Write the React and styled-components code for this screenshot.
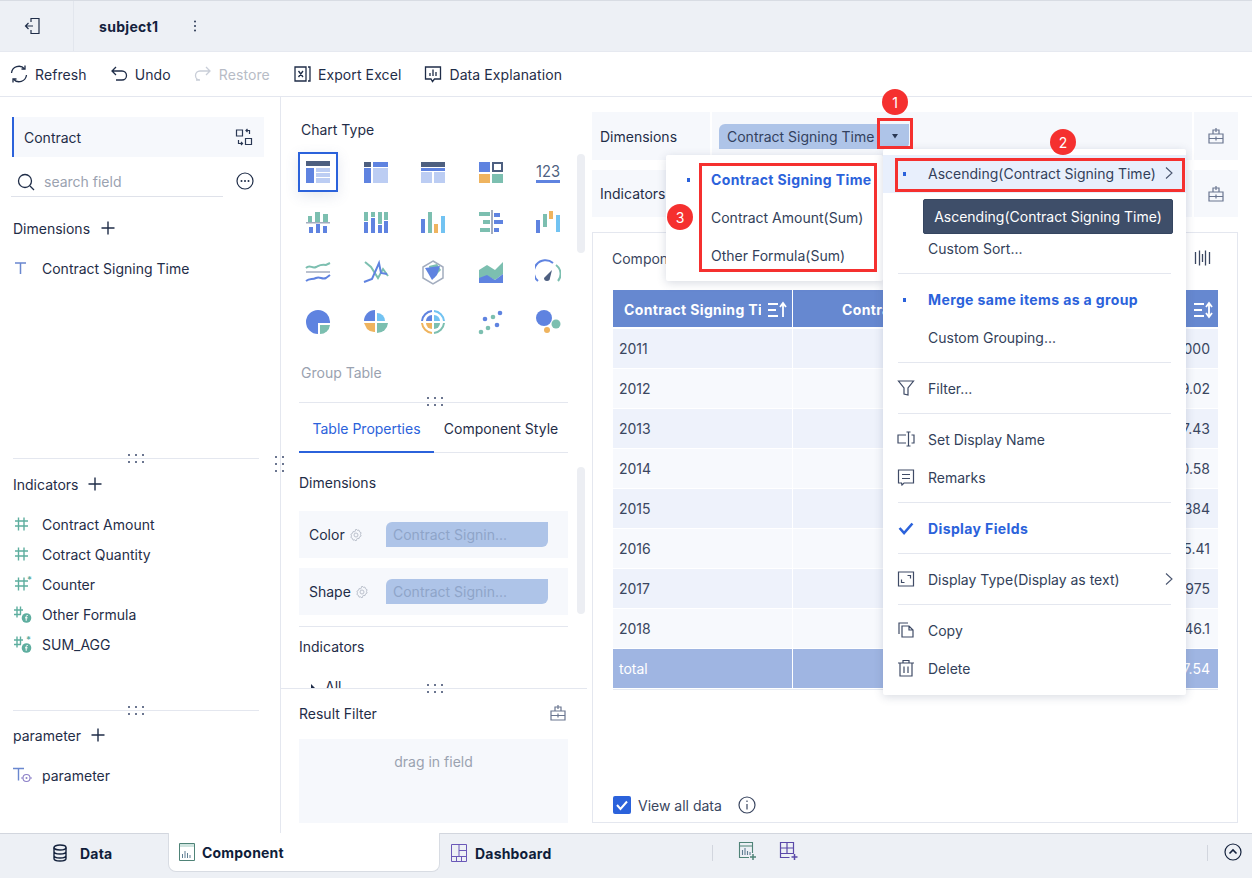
import React from "react";
import styled, { createGlobalStyle } from "styled-components";

const BLUE = "#5f83e0";
const LIGHT = "#bccdf3";
const DARK = "#4d5f80";
const TEAL = "#7cbfb0";
const ORANGE = "#efb45f";
const SKY = "#72c3f2";
const INK = "#1f2d48";

const GlobalStyle = createGlobalStyle`
  html, body {
    margin: 0;
    padding: 0;
    background: #fff;
  }
  body {
    font-family: Inter, "Liberation Sans", sans-serif;
    font-size: 14px;
    color: ${INK};
  }
  * {
    box-sizing: border-box;
  }
`;

const Page = styled.div`
  position: relative;
  width: 1252px;
  height: 878px;
  overflow: hidden;
  display: flex;
  flex-direction: column;
`;

const TopBar = styled.header`
  height: 52px;
  flex: none;
  display: flex;
  align-items: center;
  background: #edf0f5;
  border-top: 1px solid #d8dce3;
  border-bottom: 1px solid #e6e9f0;
`;

const BackCell = styled.div`
  width: 74px;
  height: 100%;
  display: flex;
  align-items: center;
  justify-content: center;
  padding-right: 8px;
  border-right: 1px solid #e2e6ed;
`;

const SubjectName = styled.span`
  margin-left: 25px;
  font-weight: 700;
  letter-spacing: 0.3px;
  color: #14223d;
  width: 94px;
`;

const ToolBar = styled.div`
  height: 45px;
  flex: none;
  display: flex;
  align-items: center;
  gap: 23px;
  padding-left: 10px;
  border-bottom: 1px solid #e4e7ef;
`;

const ToolItem = styled.div`
  display: flex;
  align-items: center;
  gap: 7px;
  letter-spacing: 0.1px;
  color: ${p => (p.$disabled ? "#b7bcc6" : INK)};
`;

const Main = styled.main`
  flex: 1;
  display: flex;
  min-height: 0;
`;

const LeftPanel = styled.aside`
  position: relative;
  width: 281px;
  flex: none;
  border-right: 1px solid #e4e7ef;
  display: flex;
  flex-direction: column;
`;

const PanelHandle = styled.div`
  position: absolute;
  left: 275px;
  top: 358px;
  display: flex;
`;

const LeftTop = styled.div`
  height: 361px;
  flex: none;
  padding: 20px 16px 0 12px;
`;

const DataSet = styled.div`
  height: 40px;
  display: flex;
  align-items: center;
  justify-content: space-between;
  padding: 0 11px 0 10px;
  background: #f6f8fc;
  border-left: 2px solid #2b62db;
`;

const SearchRow = styled.div`
  display: flex;
  align-items: center;
  justify-content: space-between;
  margin-top: 8px;
`;

const SearchBox = styled.div`
  width: 212px;
  height: 32px;
  margin-left: -1px;
  padding: 2px 0 0 6px;
  display: flex;
  align-items: center;
  gap: 9px;
  color: #9aa2b0;
  border-bottom: 1px solid #dfe2ea;
`;

const MoreCircle = styled.div`
  display: flex;
  margin-right: 10px;
`;

const LeftHeading = styled.div`
  display: flex;
  align-items: center;
  gap: ${p => p.$gap || 9}px;
  height: 20px;
  margin-top: ${p => p.$top || 0}px;
  margin-left: ${p => p.$left || 0}px;
`;

const LeftSection = styled.div`
  position: relative;
  height: ${p => p.$h}px;
  flex: ${p => (p.$h ? "none" : 1)};
  margin: 0 21px 0 13px;
  padding-top: ${p => p.$pad}px;
  border-top: 1px solid #e4e7ef;
`;

const FieldList = styled.div`
  margin-top: ${p => p.$top}px;
  margin-left: ${p => p.$left || 0}px;
`;

const FieldRow = styled.div`
  height: 30px;
  display: flex;
  align-items: center;
`;

const FieldIcon = styled.span`
  width: 29px;
  flex: none;
  display: flex;
`;

const DragDots = styled.div`
  position: absolute;
  top: ${p => (p.$top === undefined ? -6 : p.$top)}px;
  left: 50%;
  margin-left: -${p => p.$shift || 10}px;
  display: flex;
  z-index: 1;
`;

const MidPanel = styled.section`
  width: 306px;
  flex: none;
  display: flex;
  flex-direction: column;
`;

const ChartSection = styled.div`
  position: relative;
  height: 305px;
  flex: none;
  padding: 23px 19px 0 17px;
`;

const PropsSection = styled.div`
  position: relative;
  height: 286px;
  flex: none;
  overflow: hidden;
  margin: 0 19px 0 18px;
  border-top: 1px solid #e4e7ef;
`;

const Thumb = styled.div`
  position: absolute;
  right: ${p => p.$right}px;
  top: ${p => p.$top}px;
  width: 8px;
  height: ${p => p.$h}px;
  border-radius: 4px;
  background: #eceef3;
`;

const SmallTitle = styled.div`
  height: 20px;
  line-height: 20px;
  margin-left: ${p => p.$left || 0}px;
  margin-top: ${p => p.$top || 0}px;
  color: ${p => (p.$muted ? "#9aa2b0" : INK)};
`;

const ChartGrid = styled.div`
  display: grid;
  grid-template-columns: repeat(5, 40px);
  grid-auto-rows: 40px;
  justify-content: space-between;
  row-gap: 10px;
  margin: 12px 0 0 0;
  width: 270px;
`;

const ChartCell = styled.div`
  display: flex;
  align-items: center;
  justify-content: center;
  border: ${p => (p.$selected ? "2px solid #2b62db" : "0")};
  box-shadow: ${p => (p.$selected ? "0 4px 14px rgba(70, 90, 140, 0.14)" : "none")};
`;

const Tabs = styled.div`
  display: flex;
  height: 50px;
  border-bottom: 1px solid #e4e7ef;
`;

const Tab = styled.div`
  width: ${p => p.$w}px;
  display: flex;
  align-items: center;
  justify-content: center;
  padding-top: 2px;
  margin-bottom: -1px;
  color: ${p => (p.$active ? "#2b62db" : INK)};
  border-bottom: 2px solid ${p => (p.$active ? "#2b62db" : "transparent")};
`;

const PropBlock = styled.div`
  margin-top: ${p => p.$top}px;
  height: 47px;
  padding-left: 10px;
  display: flex;
  align-items: center;
  background: #f6f8fc;
`;

const PropLabel = styled.div`
  width: 77px;
  display: flex;
  align-items: center;
  gap: 4px;
`;

const DisabledPill = styled.div`
  width: 162px;
  height: 25px;
  line-height: 25px;
  padding-left: 7px;
  background: #aec4e8;
  border-radius: 6px 0 6px 0;
  color: #8ea4c9;
`;

const PropDivider = styled.div`
  margin-top: 11px;
  border-top: 1px solid #e4e7ef;
`;

const AllRow = styled.div`
  margin: 21px 0 0 12px;
  display: flex;
  align-items: center;
  gap: 8px;
`;

const ResultSection = styled.div`
  position: relative;
  flex: 1;
  padding: 14px 19px 10px 18px;
  border-top: 1px solid #e4e7ef;
`;

const ResultHead = styled.div`
  display: flex;
  align-items: center;
  justify-content: space-between;
  height: 20px;
  padding-right: 1px;
`;

const DropBox = styled.div`
  height: 84px;
  margin-top: 16px;
  padding-top: 14px;
  text-align: center;
  color: #9aa2b0;
  background: #f6f8fc;
`;

const RightPanel = styled.section`
  flex: 1;
  min-width: 0;
  display: flex;
  flex-direction: column;
  padding: 15px 14px 10px 5px;
`;

const ShelfRow = styled.div`
  height: ${p => p.$h}px;
  margin-bottom: ${p => p.$mb}px;
  flex: none;
  display: flex;
  align-items: center;
  background: #f6f8fc;
`;

const ShelfLabel = styled.div`
  width: 120px;
  height: 100%;
  display: flex;
  align-items: center;
  padding-left: 8px;
  border-right: 2px solid #fff;
`;

const ShelfBody = styled.div`
  flex: 1;
  height: 100%;
  padding: 12px 0 0 7px;
`;

const FieldPill = styled.div`
  width: 190px;
  height: 25px;
  display: flex;
  align-items: center;
  justify-content: space-between;
  padding: 0 10px 0 8px;
  background: #aec4e8;
  border-radius: 6px 0 6px 0;
  color: #33415e;
`;

const ShelfAction = styled.div`
  width: 46px;
  height: 100%;
  display: flex;
  align-items: center;
  justify-content: center;
  border-left: 2px solid #fff;
`;

const Card = styled.div`
  flex: 1;
  min-height: 0;
  display: flex;
  flex-direction: column;
  padding: 15px 19px 8px 20px;
  border: 1px solid #e4e7ef;
`;

const CardHead = styled.div`
  display: flex;
  align-items: center;
  justify-content: space-between;
  height: 20px;
  margin: 0 6px 0 -1px;
  color: #3a4660;
`;

const DataTable = styled.div`
  margin-top: 22px;
  display: flex;
  flex-direction: column;
  border-bottom: 1px solid #e6eaf2;
`;

const HeadRow = styled.div`
  height: 37px;
  display: grid;
  grid-template-columns: 179px 1fr;
  column-gap: 1px;
  margin-bottom: 2px;
  color: #fff;
  font-weight: 700;
  letter-spacing: 0.35px;
`;

const HeadCell = styled.div`
  display: flex;
  align-items: center;
  justify-content: space-between;
  background: #6688d0;
  padding: 2px 3px 0 ${p => p.$pad}px;
`;

const ClipText = styled.span`
  width: ${p => p.$w}px;
  overflow: hidden;
  white-space: nowrap;
`;

const BodyRow = styled.div`
  height: 40px;
  display: grid;
  grid-template-columns: 179px 1fr;
  column-gap: 1px;
  color: ${p => (p.$total ? "#fff" : "#3a4660")};
  border-bottom: 1px solid #fff;
`;

const BodyCell = styled.div`
  display: flex;
  align-items: center;
  padding: 0 8px 0 6px;
  justify-content: ${p => (p.$right ? "flex-end" : "flex-start")};
  background: ${p => (p.$total ? "#9fb5e2" : p.$odd ? "#eef2fb" : "#f7f9fd")};
`;

const CardFoot = styled.div`
  margin-top: auto;
  display: flex;
  align-items: center;
  color: #3a4660;
`;

const CheckBox = styled.div`
  width: 18px;
  height: 18px;
  margin-right: 7px;
  display: flex;
  align-items: center;
  justify-content: center;
  border-radius: 2px;
  background: #2b62db;
`;

const InfoWrap = styled.div`
  display: flex;
  margin-left: 16px;
`;

const BottomBar = styled.footer`
  height: 45px;
  flex: none;
  display: flex;
  align-items: flex-start;
  background: #edf0f5;
  border-top: 1px solid #d2d6de;
`;

const BottomTab = styled.div`
  width: ${p => p.$w}px;
  height: ${p => (p.$active ? 39 : 38)}px;
  margin-top: ${p => (p.$active ? -1 : 0)}px;
  padding-left: ${p => p.$pad}px;
  display: flex;
  align-items: center;
  gap: ${p => p.$gap}px;
  font-weight: 700;
  letter-spacing: 0.2px;
  color: #0f1d3a;
  background: ${p => (p.$active ? "#fff" : "transparent")};
  border: ${p => (p.$active ? "1px solid #d8dce3" : "0")};
  border-top: 0;
  border-radius: 0 0 8px 8px;
`;

const BarDivider = styled.div`
  width: 1px;
  height: 16px;
  margin-top: ${p => p.$top || 11}px;
  margin-left: ${p => p.$left}px;
  background: #d2d6de;
`;

const BarIcon = styled.div`
  display: flex;
  margin-left: ${p => p.$left}px;
  margin-top: ${p => p.$top || 7}px;
`;

const Popup = styled.div`
  position: absolute;
  left: ${p => p.$x}px;
  top: ${p => p.$y}px;
  width: ${p => p.$w}px;
  background: #fff;
  padding: 6px 0 ${p => p.$bottom || 6}px;
  border-radius: 2px;
  box-shadow: 0 2px 10px rgba(60, 75, 110, 0.2);
  z-index: 5;
`;

const MenuRow = styled.div`
  position: relative;
  height: ${p => p.$h || 38}px;
  display: flex;
  align-items: center;
  padding-left: ${p => p.$pad}px;
  padding-bottom: 2px;
  color: ${p => (p.$active ? "#2b62db" : "#333f5a")};
  font-weight: ${p => (p.$active ? 700 : 400)};
  letter-spacing: ${p => (p.$active ? "0.38px" : "0")};
  background: ${p => (p.$hover ? "#e8effc" : "transparent")};
`;

const MenuBullet = styled.span`
  position: absolute;
  left: ${p => p.$x}px;
  top: 17px;
  width: 3px;
  height: 4px;
  background: #2b62db;
`;

const MenuGlyph = styled.span`
  position: absolute;
  left: 14px;
  top: 9px;
  display: flex;
`;

const MenuArrow = styled.span`
  position: absolute;
  right: 10px;
  top: 11px;
  display: flex;
`;

const MenuDivider = styled.div`
  margin: 5px 15px 7px 15px;
  border-top: 1px solid #e4e7ef;
`;

const Hint = styled.div`
  position: absolute;
  left: 923px;
  top: 199px;
  width: 250px;
  height: 35px;
  display: flex;
  align-items: center;
  justify-content: center;
  white-space: nowrap;
  color: #fff;
  background: #3e4e69;
  border: 1px solid #354560;
  border-radius: 2px;
  z-index: 6;
`;

const RedBox = styled.div`
  position: absolute;
  left: ${p => p.$x}px;
  top: ${p => p.$y}px;
  width: ${p => p.$w}px;
  height: ${p => p.$h}px;
  border: 3px solid #f5302f;
  z-index: 7;
`;

const Badge = styled.div`
  position: absolute;
  left: ${p => p.$x - 13}px;
  top: ${p => p.$y - 13}px;
  width: 26px;
  height: 26px;
  border-radius: 50%;
  display: flex;
  align-items: center;
  justify-content: center;
  color: #fff;
  background: #f5302f;
  font-size: 14px;
  z-index: 8;
`;

const Line = ({ size = 18, children, vb = 18, color = INK, sw = 1.3 }) => (
  <svg width={size} height={size} viewBox={`0 0 ${vb} ${vb}`} fill="none" stroke={color} strokeWidth={sw}>
    {children}
  </svg>
);

const Dots = ({ vertical }) => (
  <svg width={vertical ? 10 : 20} height={vertical ? 20 : 10} fill="#6b7690" stroke="none">
    {(vertical
      ? [[1, 2], [8, 2], [1, 9], [8, 9], [1, 16], [8, 16]]
      : [[3, 2], [10, 2], [17, 2], [3, 9], [10, 9], [17, 9]]
    ).map(([x, y]) => (
      <rect key={`${x}-${y}`} x={x - 1} y={y - 1} width="2" height="2" />
    ))}
  </svg>
);

const PlusIcon = () => (
  <Line size={14} vb={14} sw={1.4}>
    <path d="M7 .5v13M.5 7h13" />
  </Line>
);

const BoxIcon = () => (
  <Line color="#6a7690" sw={1.2}>
    <path d="M2 7h14v9H2zM2 11.500h14M6 7V3h6v4M9 1v4M9 9.500v4" />
  </Line>
);

const Hash = ({ star, formula }) => (
  <svg width="20" height="20" viewBox="0 0 20 20" fill="none">
    <g stroke="#5eae9f" strokeWidth="1.4">
      {formula ? (
        <path d="M1 6h9M1 10.500h7M4 2.500v11M7.500 2.500v8" />
      ) : (
        <path d="M2 7h13M2 12h13M5.500 3.500v13M11 3.500v13" />
      )}
    </g>
    {star && <text x={formula ? 13 : 14} y="9" fontSize="9" fontWeight="700" fill="#5eae9f">*</text>}
    {formula && (
      <g>
        <circle cx="13.500" cy="14" r="4.800" fill="#5eae9f" />
        <path d="M14.800 11.500c-1.200-.3-1.600.4-1.600 1.300v4M12 13.800h2.600" stroke="#fff" strokeWidth="1" />
      </g>
    )}
  </svg>
);

const TextFieldIcon = () => (
  <svg width="18" height="18" viewBox="0 0 18 18" fill="none" stroke="#6a87cf" strokeWidth="1.5">
    <path d="M2 4h11M7.500 4v11" />
  </svg>
);

const ParamIcon = () => (
  <svg width="20" height="20" viewBox="0 0 20 20" fill="none" stroke="#6a87cf" strokeWidth="1.4">
    <path d="M0 3.500h11M5.500 3.500v12" />
    <circle cx="13.500" cy="13" r="3.500" stroke="#8c80c8" strokeWidth="1.100" />
    <circle cx="13.500" cy="13" r="1" fill="#8c80c8" stroke="none" />
    <path d="M8 13h2M17 13h2" stroke="#8c80c8" strokeWidth="1" />
  </svg>
);

const SortIcon = ({ both }) => (
  <svg width="22" height="20" viewBox="0 0 22 20" fill="none" stroke="#fff" strokeWidth="1.800">
    <path d="M1 4h10M1 10h8M1 16h10M16 17V4M13 7l3-4 3 4" />
    {both && <path d="M13 13l3 4 3-4" />}
  </svg>
);

const GearIcon = () => (
  <svg width="14" height="14" viewBox="0 0 14 14" fill="none" stroke="#bcc2cd" strokeWidth="1">
    <path d="M7 1l1.200 1.300 1.800-.2.500 1.700 1.600.9-.6 1.700.6 1.600-1.600.9-.5 1.700-1.800-.2L7 13l-1.200-1.100-1.800.2-.5-1.700-1.600-.9.6-1.600-.6-1.700 1.600-.9.5-1.700 1.800.2z" />
    <circle cx="7" cy="7" r="2" />
  </svg>
);

const ChartGlyph = ({ children }) => (
  <svg width="26" height="26" viewBox="-1 -1 26 26" fill="none">
    {children}
  </svg>
);

const Bars = ({ items }) =>
  items.map(([x, y, w, h, fill]) => <rect key={`${x}-${y}`} x={x} y={y} width={w} height={h} fill={fill} />);

const chartGlyphs = [
  <Bars items={[[0, 1, 24, 5, DARK], [0, 8, 8, 15, BLUE], [10, 8, 14, 4, LIGHT], [10, 13, 14, 4, LIGHT], [10, 18, 14, 5, LIGHT]]} />,
  <Bars items={[[0, 2, 7, 5, DARK], [9, 2, 15, 5, BLUE], [0, 8, 7, 15, BLUE], [9, 8, 15, 15, LIGHT]]} />,
  <Bars items={[[0, 2, 24, 5, DARK], [0, 8, 24, 3, BLUE], [0, 12, 11, 11, LIGHT], [13, 12, 11, 11, LIGHT]]} />,
  <>
    <rect x="0" y="2" width="11" height="10" fill={BLUE} />
    <rect x="14" y="3" width="9" height="8" stroke={DARK} strokeWidth="2" />
    <rect x="0" y="14" width="11" height="9" fill={ORANGE} />
    <rect x="13" y="14" width="11" height="9" fill={TEAL} />
  </>,
  <>
    <text x="0" y="17" fontSize="16" fill={DARK} fontFamily="Inter, sans-serif" textLength="24" lengthAdjust="spacingAndGlyphs">123</text>
    <rect x="0" y="20" width="24" height="3" fill={BLUE} />
  </>,
  <Bars items={[[2, 6, 4, 6, TEAL], [9, 2, 5, 10, TEAL], [17, 4, 5, 8, TEAL], [0, 12, 24, 1.500, "#a3adbf"], [3, 17, 4, 6, BLUE], [10, 14, 4, 9, BLUE], [17, 16, 4, 7, BLUE]]} />,
  <Bars items={[[0, 2, 4, 9, TEAL], [0, 12, 4, 11, BLUE], [7, 2, 4, 5, TEAL], [7, 8, 4, 15, BLUE], [14, 2, 4, 12, TEAL], [14, 15, 4, 8, BLUE], [20, 2, 4, 8, TEAL], [20, 11, 4, 12, BLUE]]} />,
  <Bars items={[[0, 9, 4, 14, BLUE], [7, 2, 4, 21, TEAL], [13, 14, 4, 9, ORANGE], [20, 6, 4, 17, SKY]]} />,
  <Bars items={[[0, 2, 11, 4, TEAL], [4, 10, 7, 4, TEAL], [1, 18, 10, 4, TEAL], [12, 0, 2, 24, "#a3adbf"], [15, 3, 6, 4, BLUE], [15, 10, 9, 4, BLUE], [15, 18, 5, 4, BLUE]]} />,
  <Bars items={[[0, 10, 4, 13, BLUE], [7, 4, 4, 13, TEAL], [13, 1, 4, 8, ORANGE], [20, 5, 4, 17, SKY]]} />,
  <>
    <path d="M0 8c4-4 6 1 10-1s5-3 10-2l4-2" stroke={TEAL} strokeWidth="2" />
    <path d="M0 12h24" stroke="#a3adbf" strokeWidth="1.500" />
    <path d="M0 21c4-3 6-1 10-3s6 2 10 0l4-3" stroke={BLUE} strokeWidth="2" />
  </>,
  <>
    <path d="M1 2l6 5 7 11 5-9 5 7" stroke={TEAL} strokeWidth="2" />
    <path d="M0 22l8-3 7-16 2 10 6 1" stroke={BLUE} strokeWidth="2" />
  </>,
  <>
    <path d="M12 1l10 6v11l-10 6-10-6V7z" stroke="#a3adbf" strokeWidth="1.500" />
    <path d="M8 6l8-2 4 6-4 4-3 4-4-6z" fill={TEAL} />
    <path d="M4 8l15-2-3 9-5 5-4-7z" fill={BLUE} />
  </>,
  <>
    <path d="M0 10l8-5 8 5 8-8v12l-8 6-8-4-8 4z" fill={TEAL} />
    <path d="M0 18l8-3 8 5 8-6v9H0z" fill={BLUE} />
  </>,
  <>
    <path d="M2 21A11 11 0 0 1 17 3" stroke={BLUE} strokeWidth="2" />
    <path d="M20 5a11 11 0 0 1 2 16" stroke={TEAL} strokeWidth="2" />
    <path d="M8 18l8-8-2 8a3 3 0 0 1-6 0z" fill={DARK} />
  </>,
  <>
    <path d="M12 0a12 12 0 1 0 0 24v-11h12a12 12 0 0 0-12-13z" fill={BLUE} />
    <path d="M14 15h10a10 10 0 0 1-10 9z" fill={TEAL} />
  </>,
  <>
    <path d="M11 0v11H0A11 11 0 0 1 11 0z" fill={BLUE} />
    <path d="M13 3a8 8 0 0 1 8 8h-8z" fill={SKY} />
    <path d="M0 13h11v9A10 10 0 0 1 3 19z" fill={ORANGE} />
    <path d="M13 13h11a11 11 0 0 1-11 10z" fill={TEAL} />
  </>,
  <>
    <path d="M1 11A11 11 0 0 1 11 1" stroke={BLUE} strokeWidth="2" />
    <path d="M13 1a11 11 0 0 1 10 10" stroke={SKY} strokeWidth="2" />
    <path d="M1 13a11 11 0 0 0 10 10" stroke={ORANGE} strokeWidth="2" />
    <path d="M13 23a11 11 0 0 0 10-10" stroke={TEAL} strokeWidth="2" />
    <path d="M11 5v6H5a6 6 0 0 1 6-6z" fill={BLUE} />
    <path d="M13 5a6 6 0 0 1 6 6h-6z" fill={SKY} />
    <path d="M5 13h6v6a6 6 0 0 1-6-6z" fill={ORANGE} />
    <path d="M13 13h6a6 6 0 0 1-6 6z" fill={TEAL} />
  </>,
  <>
    <circle cx="6" cy="9" r="2.300" fill={BLUE} />
    <circle cx="14" cy="7" r="2.300" fill={TEAL} />
    <circle cx="21" cy="3" r="2.300" fill={BLUE} />
    <circle cx="2" cy="22" r="2.300" fill={TEAL} />
    <circle cx="9" cy="18" r="2.300" fill={TEAL} />
    <circle cx="18" cy="15" r="2.300" fill={BLUE} />
  </>,
  <>
    <circle cx="8" cy="8" r="8" fill={BLUE} />
    <circle cx="20" cy="14" r="4.500" fill={TEAL} />
    <circle cx="11" cy="20" r="3" fill={ORANGE} />
  </>
];

const BackIcon = () => (
  <Line sw={1.200}>
    <path d="M7 5V1.500h8v15H7V13M9 9H1.500M4.500 6L1.500 9l3 3" />
  </Line>
);

const KebabIcon = () => (
  <svg width="4" height="14" fill="#2a3854">
    <circle cx="2" cy="2.500" r="1" />
    <circle cx="2" cy="7" r="1" />
    <circle cx="2" cy="11.500" r="1" />
  </svg>
);

const RefreshIcon = () => (
  <Line>
    <path d="M1.500 8a7.500 7.500 0 0 1 13-4.200M16.500 10a7.500 7.500 0 0 1-13 4.200" />
    <path d="M15 .5v3.500h-3.500M3 17.500V14h3.500" />
  </Line>
);

const UndoIcon = ({ color = INK, flip }) => (
  <Line color={color}>
    <path d={flip ? "M12 2l4 4-4 4M16 6H6a4.500 4.500 0 0 0 0 9h-4" : "M6 2L2 6l4 4M2 6h10a4.500 4.500 0 0 1 0 9H6"} />
  </Line>
);

const ExcelIcon = () => (
  <Line>
    <path d="M13 2H2v14h11zM15 2h2v14h-2M5.500 6l4.500 6M10 6l-4.500 6" />
  </Line>
);

const ExplainIcon = () => (
  <Line>
    <path d="M1.500 2h15v12h-6l-2 2.500-1.500-2.500H1.500zM6 11V8M9 11V4.500M12 11V7" />
  </Line>
);

const SwapIcon = () => (
  <Line sw={1.200} color="#2a3854">
    <path d="M1.500 2h6v6h-6zM10.500 10.500h6v6h-6zM11 2.500h3.500v3.500M12.500 1l-1.500 1.500 1.500 1.500M7.500 15.500H3.500v-3.500M6 17l1.500-1.500L6 14" />
  </Line>
);

const SearchIcon = () => (
  <Line>
    <circle cx="8" cy="8" r="6.500" />
    <path d="M13 13l4 4" />
  </Line>
);

const MoreIcon = () => (
  <svg width="18" height="18" viewBox="0 0 18 18" fill={INK}>
    <circle cx="9" cy="9" r="8" fill="none" stroke={INK} strokeWidth="1.200" />
    <circle cx="5.500" cy="9" r="1" />
    <circle cx="9" cy="9" r="1" />
    <circle cx="12.500" cy="9" r="1" />
  </svg>
);

const BarcodeIcon = () => (
  <Line color="#3a4660">
    <path d="M1.500 3v12M5.500 1.500v15M8.500 5v8M11.500 1.500v15M15.500 3v12" />
  </Line>
);

const InfoIcon = () => (
  <Line color="#3a4660" sw={1.200}>
    <circle cx="9" cy="9" r="8" />
    <path d="M9 8v5.500M9 4.500v1.500" />
  </Line>
);

const CheckMark = ({ color = "#fff", size = 14 }) => (
  <Line size={size} vb={14} color={color} sw={2}>
    <path d="M2 7l3.500 4L12 3.500" />
  </Line>
);

const CaretIcon = () => (
  <svg width="8" height="5" viewBox="0 0 8 5" fill="#2a3854">
    <path d="M1 0h6L4 4.500z" />
  </svg>
);

const DatabaseIcon = () => (
  <Line sw={1.400} color="#14223d">
    <ellipse cx="9" cy="3.500" rx="6" ry="2.500" />
    <path d="M3 3.500v11c0 1.400 2.700 2.500 6 2.500s6-1.100 6-2.500v-11M3 7.500c0 1.400 2.700 2.500 6 2.500s6-1.100 6-2.500M3 11.500c0 1.400 2.700 2.500 6 2.500s6-1.100 6-2.500" />
  </Line>
);

const ComponentTabIcon = () => (
  <svg width="16" height="18" viewBox="0 0 16 18" fill="none" stroke="#4f8377" strokeWidth="1">
    <path d="M.5.500h15v17H.5z" />
    <path d="M1 1h14v3H1z" fill="#cfe4df" stroke="none" />
    <path d="M3.500 15v-4M6 15V8M8.500 15v-5M11 15v-3" stroke="#5f7d92" />
  </svg>
);

const DashboardTabIcon = () => (
  <svg width="16" height="18" viewBox="0 0 16 18" fill="none" stroke="#6a58b8" strokeWidth="1">
    <path d="M.5.500h15v17H.5zM8 .5v12M.5 12.500h15M5.500 12.500v5M10.500 12.500v5M8 6.500h7.500" />
  </svg>
);

const AddComponentIcon = () => (
  <svg width="20" height="20" viewBox="0 0 20 20" fill="none" stroke="#4f8377" strokeWidth="1.100">
    <path d="M14.500 12V1.500H1.500v15H11M1.500 5h13" />
    <path d="M4.500 14V9M7 14V7M9.500 14v-4M12 14v-3" stroke="#5f7d92" />
    <path d="M15 13v6M12 16h6" strokeWidth="1.500" />
  </svg>
);

const AddDashboardIcon = () => (
  <svg width="20" height="20" viewBox="0 0 20 20" fill="none" stroke="#5a48a8" strokeWidth="1.200">
    <path d="M1.500 1.500h13v11h-13zM8 1.500v11M1.500 7h13M1.500 12.500v4h9" />
    <path d="M15.500 13v6M12.500 16h6" strokeWidth="1.500" />
  </svg>
);

const UpCircleIcon = () => (
  <Line color="#14223d" sw={1.200}>
    <circle cx="9" cy="9" r="8" />
    <path d="M5.500 10.500L9 7l3.500 3.500" strokeWidth="1.600" />
  </Line>
);

const Chevron = () => (
  <Line size={14} vb={14} color="#4a5670" sw={1.100}>
    <path d="M4 1.500L10 7l-6 5.500" />
  </Line>
);

const FilterIcon = () => (
  <Line color="#3f4b66" sw={1.200}>
    <path d="M1.500 2h15L11 9v7l-4-1V9z" />
  </Line>
);

const RenameIcon = () => (
  <Line color="#3f4b66" sw={1.200}>
    <path d="M9 5H1v8h8M11.500 2v14M9.500 2h4M9.500 16h4M14.500 5H17v8h-2.500" />
  </Line>
);

const RemarkIcon = () => (
  <Line color="#3f4b66" sw={1.200}>
    <path d="M1.500 2h15v13H7L5 17l-.5-2h-3zM5 6.500h8M5 10.500h8" />
  </Line>
);

const ExpandIcon = () => (
  <Line color="#3f4b66" sw={1.200}>
    <path d="M1.500 2h15v14h-15zM10.500 5.500h3v3M7.500 12.500h-3v-3" />
  </Line>
);

const CopyIcon = () => (
  <Line color="#3f4b66" sw={1.200}>
    <path d="M2 13V2h9M5 5h7l4 4v7H5zM12 5v4h4" />
  </Line>
);

const TrashIcon = () => (
  <Line color="#3f4b66" sw={1.200}>
    <path d="M1 4h16M6 4V1.500h6V4M3 4v13h12V4M7 7.500v6.500M11 7.500v6.500" />
  </Line>
);

const years = ["2011", "2012", "2013", "2014", "2015", "2016", "2017", "2018"];
const amounts = ["000", "9.02", "7.43", "0.58", "384", "5.41", "975", "46.1"];

const indicators = [
  { name: "Contract Amount", icon: <Hash /> },
  { name: "Cotract Quantity", icon: <Hash /> },
  { name: "Counter", icon: <Hash star /> },
  { name: "Other Formula", icon: <Hash formula /> },
  { name: "SUM_AGG", icon: <Hash formula star /> }
];

const App = () => (
  <Page>
    <GlobalStyle />
    <TopBar>
      <BackCell>
        <BackIcon />
      </BackCell>
      <SubjectName>subject1</SubjectName>
      <KebabIcon />
    </TopBar>
    <ToolBar>
      <ToolItem><RefreshIcon />Refresh</ToolItem>
      <ToolItem><UndoIcon />Undo</ToolItem>
      <ToolItem $disabled><UndoIcon flip color="#c9ced8" />Restore</ToolItem>
      <ToolItem><ExcelIcon />Export Excel</ToolItem>
      <ToolItem><ExplainIcon />Data Explanation</ToolItem>
    </ToolBar>
    <Main>
      <LeftPanel>
        <PanelHandle><Dots vertical /></PanelHandle>
        <LeftTop>
          <DataSet>Contract<SwapIcon /></DataSet>
          <SearchRow>
            <SearchBox><SearchIcon />search field</SearchBox>
            <MoreCircle><MoreIcon /></MoreCircle>
          </SearchRow>
          <LeftHeading $top={21} $left={1} $gap={11}>Dimensions <PlusIcon /></LeftHeading>
          <FieldList $top={15} $left={1}>
            <FieldRow>
              <FieldIcon><TextFieldIcon /></FieldIcon>
              Contract Signing Time
            </FieldRow>
          </FieldList>
        </LeftTop>
        <LeftSection $h={252} $pad={15}>
          <DragDots><Dots /></DragDots>
          <LeftHeading>Indicators <PlusIcon /></LeftHeading>
          <FieldList $top={15}>
            {indicators.map(item => (
              <FieldRow key={item.name}>
                <FieldIcon>{item.icon}</FieldIcon>
                {item.name}
              </FieldRow>
            ))}
          </FieldList>
        </LeftSection>
        <LeftSection $pad={14}>
          <DragDots><Dots /></DragDots>
          <LeftHeading $gap={10}>parameter <PlusIcon /></LeftHeading>
          <FieldList $top={15}>
            <FieldRow>
              <FieldIcon><ParamIcon /></FieldIcon>
              parameter
            </FieldRow>
          </FieldList>
        </LeftSection>
      </LeftPanel>

      <MidPanel>
        <ChartSection>
          <Thumb $right={2} $top={57} $h={99} />
          <DragDots $top={299} $shift={9}><Dots /></DragDots>
          <SmallTitle $left={3}>Chart Type</SmallTitle>
          <ChartGrid>
            {chartGlyphs.map((glyph, i) => (
              <ChartCell key={i} $selected={i === 0}>
                <ChartGlyph>{glyph}</ChartGlyph>
              </ChartCell>
            ))}
          </ChartGrid>
          <SmallTitle $left={3} $top={21} $muted>Group Table</SmallTitle>
        </ChartSection>
        <PropsSection>
          <Tabs>
            <Tab $w={135} $active>Table Properties</Tab>
            <Tab $w={134}>Component Style</Tab>
          </Tabs>
          <SmallTitle $top={20}>Dimensions</SmallTitle>
          <PropBlock $top={18}>
            <PropLabel>Color <GearIcon /></PropLabel>
            <DisabledPill>Contract Signin...</DisabledPill>
          </PropBlock>
          <PropBlock $top={10}>
            <PropLabel>Shape <GearIcon /></PropLabel>
            <DisabledPill>Contract Signin...</DisabledPill>
          </PropBlock>
          <PropDivider />
          <SmallTitle $top={10}>Indicators</SmallTitle>
          <AllRow>
            <svg width="6" height="6" fill={INK}><path d="M0 0l6 6H0z" /></svg>
            All
          </AllRow>
        </PropsSection>
        <ResultSection>
          <Thumb $right={2} $top={-222} $h={147} />
          <DragDots $shift={9}><Dots /></DragDots>
          <ResultHead>Result Filter<BoxIcon /></ResultHead>
          <DropBox>drag in field</DropBox>
        </ResultSection>
      </MidPanel>

      <RightPanel>
        <ShelfRow $h={48} $mb={10}>
          <ShelfLabel>Dimensions</ShelfLabel>
          <ShelfBody>
            <FieldPill>Contract Signing Time<CaretIcon /></FieldPill>
          </ShelfBody>
          <ShelfAction><BoxIcon /></ShelfAction>
        </ShelfRow>
        <ShelfRow $h={47} $mb={15}>
          <ShelfLabel>Indicators</ShelfLabel>
          <ShelfBody />
          <ShelfAction><BoxIcon /></ShelfAction>
        </ShelfRow>
        <Card>
          <CardHead>Component<BarcodeIcon /></CardHead>
          <DataTable>
            <HeadRow>
              <HeadCell $pad={11}>
                <ClipText $w={137}>Contract Signing Time</ClipText>
                <SortIcon />
              </HeadCell>
              <HeadCell $pad={49}>
                <span>Contract Amount(Sum)</span>
                <SortIcon both />
              </HeadCell>
            </HeadRow>
            {years.map((year, i) => (
              <BodyRow key={year}>
                <BodyCell $odd={i % 2 === 0}>{year}</BodyCell>
                <BodyCell $odd={i % 2 === 0} $right>{amounts[i]}</BodyCell>
              </BodyRow>
            ))}
            <BodyRow $total>
              <BodyCell $total>total</BodyCell>
              <BodyCell $total $right>7.54</BodyCell>
            </BodyRow>
          </DataTable>
          <CardFoot>
            <CheckBox><CheckMark /></CheckBox>
            View all data
            <InfoWrap><InfoIcon /></InfoWrap>
          </CardFoot>
        </Card>
      </RightPanel>
    </Main>
    <BottomBar>
      <BottomTab $w={168} $pad={51} $gap={11}><DatabaseIcon />Data</BottomTab>
      <BottomTab $active $w={272} $pad={10} $gap={7}><ComponentTabIcon />Component</BottomTab>
      <BottomTab $w={272} $pad={11} $gap={8}><DashboardTabIcon />Dashboard</BottomTab>
      <BarDivider $left={0} />
      <BarIcon $left={25}><AddComponentIcon /></BarIcon>
      <BarIcon $left={21}><AddDashboardIcon /></BarIcon>
      <BarDivider $left={408} />
      <BarIcon $left={16} $top={9}><UpCircleIcon /></BarIcon>
    </BottomBar>

    <Popup $x={666} $y={155} $w={217}>
      <MenuRow $pad={45} $active>
        <MenuBullet $x={21} />
        Contract Signing Time
      </MenuRow>
      <MenuRow $pad={45}>Contract Amount(Sum)</MenuRow>
      <MenuRow $pad={45}>Other Formula(Sum)</MenuRow>
    </Popup>

    <Popup $x={883} $y={149} $w={303} $bottom={7}>
      <MenuRow $pad={45} $hover>
        <MenuBullet $x={20} />
        Ascending(Contract Signing Time)
        <MenuArrow><Chevron /></MenuArrow>
      </MenuRow>
      <MenuRow $pad={45} $h={37} />
      <MenuRow $pad={45}>Custom Sort...</MenuRow>
      <MenuDivider />
      <MenuRow $pad={45} $active>
        <MenuBullet $x={20} />
        Merge same items as a group
      </MenuRow>
      <MenuRow $pad={45}>Custom Grouping...</MenuRow>
      <MenuDivider />
      <MenuRow $pad={45}>
        <MenuGlyph><FilterIcon /></MenuGlyph>
        Filter...
      </MenuRow>
      <MenuDivider />
      <MenuRow $pad={45}>
        <MenuGlyph><RenameIcon /></MenuGlyph>
        Set Display Name
      </MenuRow>
      <MenuRow $pad={45}>
        <MenuGlyph><RemarkIcon /></MenuGlyph>
        Remarks
      </MenuRow>
      <MenuDivider />
      <MenuRow $pad={45} $active>
        <MenuGlyph><CheckMark color="#2b62db" size={18} /></MenuGlyph>
        Display Fields
      </MenuRow>
      <MenuDivider />
      <MenuRow $pad={45}>
        <MenuGlyph><ExpandIcon /></MenuGlyph>
        Display Type(Display as text)
        <MenuArrow><Chevron /></MenuArrow>
      </MenuRow>
      <MenuDivider />
      <MenuRow $pad={45}>
        <MenuGlyph><CopyIcon /></MenuGlyph>
        Copy
      </MenuRow>
      <MenuRow $pad={45}>
        <MenuGlyph><TrashIcon /></MenuGlyph>
        Delete
      </MenuRow>
    </Popup>

    <Hint>Ascending(Contract Signing Time)</Hint>

    <RedBox $x={877} $y={118} $w={36} $h={31} />
    <RedBox $x={895} $y={158} $w={290} $h={34} />
    <RedBox $x={699} $y={163} $w={178} $h={109} />
    <Badge $x={895} $y={102}>1</Badge>
    <Badge $x={1063} $y={142}>2</Badge>
    <Badge $x={680} $y={217}>3</Badge>
  </Page>
);

export default App;
